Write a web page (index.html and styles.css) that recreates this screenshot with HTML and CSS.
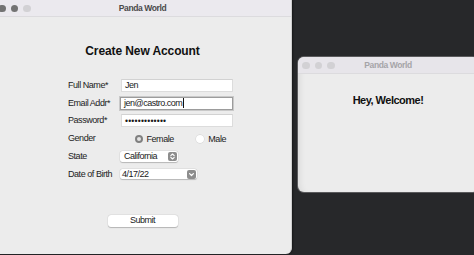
FILE: index.html
```html
<!DOCTYPE html>
<html>
<head>
<meta charset="utf-8">
<link rel="stylesheet" href="styles.css">
</head>
<body>
<div class="desktop">
  <div class="window main">
    <div class="titlebar">
      <div class="lights">
        <span class="light dark"></span>
        <span class="light dark"></span>
        <span class="light pale"></span>
      </div>
      <div class="wtitle">Panda World</div>
    </div>
    <div class="content">
      <h1 class="heading">Create New Account</h1>
      <div class="form">
        <div class="label">Full Name*</div>
        <div class="field input">Jen</div>
        <div class="label">Email Addr*</div>
        <div class="field input focus">jen@castro.com<span class="caret"></span></div>
        <div class="label">Password*</div>
        <div class="field input pw">•••••••••••••</div>
        <div class="label">Gender</div>
        <div class="radios">
          <span class="radio on"></span><span class="rtext">Female</span>
          <span class="radio off"></span><span class="rtext">Male</span>
        </div>
        <div class="label">State</div>
        <div class="field popup state">
          <span>California</span>
          <span class="knob">
            <svg width="9" height="9" viewBox="0 0 9 9"><path d="M2.8 3.6 L4.5 2 L6.2 3.6 M2.8 5.4 L4.5 7 L6.2 5.4" fill="none" stroke="#fff" stroke-width="1.1" stroke-linecap="round" stroke-linejoin="round"/></svg>
          </span>
        </div>
        <div class="label">Date of Birth</div>
        <div class="field popup date">
          <span>4/17/22</span>
          <span class="knob">
            <svg width="9" height="9" viewBox="0 0 9 9"><path d="M2.6 3.6 L4.5 5.5 L6.4 3.6" fill="none" stroke="#fff" stroke-width="1.2" stroke-linecap="round" stroke-linejoin="round"/></svg>
          </span>
        </div>
      </div>
      <div class="actions"><div class="button">Submit</div></div>
    </div>
  </div>

  <div class="window second">
    <div class="titlebar">
      <div class="lights">
        <span class="light pale"></span>
        <span class="light pale"></span>
        <span class="light pale"></span>
      </div>
      <div class="wtitle faded">Panda World</div>
    </div>
    <div class="content">
      <h2 class="welcome">Hey, Welcome!</h2>
    </div>
  </div>
</div>
</body>
</html>
```

FILE: styles.css
```css
* { box-sizing: border-box; }
html, body { margin: 0; padding: 0; }
body {
  width: 474px;
  height: 255px;
  overflow: hidden;
  font-family: "Liberation Sans", Arial, sans-serif;
  color: #1d1d1d;
}
.desktop {
  position: relative;
  width: 474px;
  height: 255px;
  background: #27282a;
  overflow: hidden;
}
.window {
  position: absolute;
  background: #ececec;
  display: flex;
  flex-direction: column;
}
.main {
  left: -6px;
  top: 0;
  width: 298px;
  height: 254px;
  border-radius: 0 0 6px 6px;
  border-right: 1px solid #cfcfcf;
  box-shadow: 1px 0 2px rgba(0,0,0,0.4);
}
.second {
  left: 298px;
  top: 57px;
  width: 180px;
  height: 135px;
  border-radius: 6px;
  box-shadow: 0 0 0 1px #5a5a5c, inset 6px 0 6px -4px rgba(0,0,0,0.08);
}
.titlebar {
  position: relative;
  height: 17px;
  flex: none;
  background: #ebe9ee;
  border-bottom: 1px solid #dcdbde;
  display: flex;
  align-items: center;
  justify-content: center;
}
.second .titlebar { border-radius: 6px 6px 0 0; background: #e7e5ea; }
.lights {
  position: absolute;
  left: 4px;
  top: 4.5px;
  display: flex;
  gap: 5px;
}
.light {
  width: 7.5px;
  height: 7.5px;
  border-radius: 50%;
}
.light.dark { background: #737373; }
.light.pale { background: #d2d1d4; }
.wtitle {
  font-weight: bold;
  font-size: 8.5px;
  letter-spacing: -0.4px;
  color: #4a4a4a;
  line-height: 10px;
}
.wtitle.faded { color: #a5a4a8; }
.content {
  flex: 1;
  display: flex;
  flex-direction: column;
}
.heading {
  margin: 26.5px 0 0;
  text-align: center;
  font-size: 12px;
  letter-spacing: -0.1px;
  line-height: 14px;
  font-weight: bold;
  color: #111;
}
.form {
  margin: 21.6px 0 0 74px;
  display: grid;
  grid-template-columns: 52px 113px;
  grid-auto-rows: 13px;
  row-gap: 4.7px;
  align-items: center;
}
.label {
  font-size: 9px;
  letter-spacing: -0.45px;
  line-height: 13px;
  color: #222;
  white-space: nowrap;
}
.field {
  font-size: 9px;
  letter-spacing: -0.5px;
  color: #1a1a1a;
  white-space: nowrap;
}
.input {
  height: 13px;
  margin-left: 1px;
  background: #fff;
  border: 1px solid #dcdcdc;
  border-top-color: #d2d2d2;
  padding: 0 3px;
  line-height: 11px;
  display: flex;
  align-items: center;
}
.input.focus {
  height: 13.5px;
  margin-left: 0;
  border: 1px solid #9c9c9c;
  box-shadow: 0 0 0 1px #c9c9c9;
}
.caret {
  display: inline-block;
  width: 1px;
  height: 10px;
  background: #111;
  margin-left: 1px;
}
.input.pw { letter-spacing: 0.2px; font-size: 8.5px; padding-top: 1px; }
.radios {
  display: flex;
  align-items: center;
  font-size: 9px;
  letter-spacing: -0.45px;
  color: #222;
}
.radio {
  width: 8px;
  height: 8px;
  border-radius: 50%;
  flex: none;
}
.radio.on {
  margin-left: 14.5px;
  border: 2.4px solid #808080;
  background: #e4e4e4;
}
.radio.off {
  margin-left: 22.5px;
  background: #fff;
  box-shadow: 0 0 0 0.5px #d0d0d0;
}
.rtext { margin-left: 4px; }
.popup {
  height: 10.5px;
  background: #fff;
  border-radius: 2.5px;
  box-shadow: 0 0.5px 1px rgba(0,0,0,0.2), 0 0 0 0.5px rgba(0,0,0,0.06);
  display: flex;
  align-items: center;
  justify-content: space-between;
  padding: 0 1px 0 4px;
  line-height: 10px;
}
.popup.state { width: 57.5px; }
.popup.date { width: 77px; padding-left: 2px; }
.knob {
  width: 9px;
  height: 9px;
  border-radius: 2px;
  background: #8d8d8d;
  display: flex;
}
.actions {
  margin-top: 34.7px;
  display: flex;
  justify-content: center;
}
.button {
  width: 70px;
  height: 11.5px;
  background: #fff;
  border-radius: 3px;
  box-shadow: 0 0.5px 1px rgba(0,0,0,0.22), 0 0 0 0.5px rgba(0,0,0,0.05);
  font-size: 9px;
  letter-spacing: -0.5px;
  line-height: 11.5px;
  text-align: center;
  color: #1a1a1a;
}
.welcome {
  margin: 20px 0 0;
  text-align: center;
  font-size: 11px;
  letter-spacing: -0.5px;
  line-height: 12px;
  font-weight: bold;
  color: #111;
}
```
